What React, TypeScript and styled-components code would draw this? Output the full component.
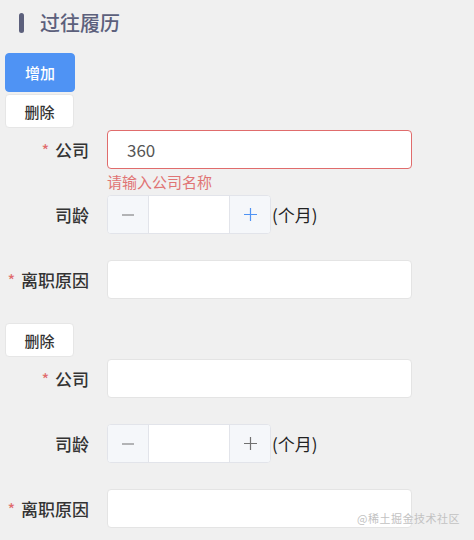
import React from 'react';
import styled, {createGlobalStyle} from 'styled-components';

const FONT = `"Noto Sans CJK SC", "Noto Sans", sans-serif`;

const GlobalStyle = createGlobalStyle`
	html, body {
		margin: 0;
		padding: 0;
		background: #f0f0f0;
	}
	body {
		font-family: ${FONT};
		width: 474px;
		height: 540px;
		overflow: hidden;
	}
`;

type TExperience = {
	company: string;
	error?: string;
	months: string;
	reason: string;
	activePlus?: boolean;
};

const data: TExperience[] = [
	{company: '360', error: '请输入公司名称', months: '', reason: '', activePlus: true},
	{company: '', months: '', reason: ''},
];

function MinusIcon() {
	return (
		<svg width="14" height="14" viewBox="0 0 14 14">
			<path d="M1 7h12" stroke="currentColor" strokeWidth="1.2" />
		</svg>
	);
}

function PlusIcon() {
	return (
		<svg width="15" height="15" viewBox="0 0 15 15">
			<path d="M1 7.5h13M7.5 1v13" stroke="currentColor" strokeWidth="1.2" />
		</svg>
	);
}

function Experience({item}: {item: TExperience}) {
	return (
		<Block>
			<FormItem>
				<Label required>公司</Label>
				<Content>
					<TextInput error={!!item.error} defaultValue={item.company} />
					{item.error && <ErrorText>{item.error}</ErrorText>}
				</Content>
			</FormItem>
			<FormItem>
				<Label>司龄</Label>
				<Content>
					<Stepper>
						<StepButton>
							<MinusIcon />
						</StepButton>
						<StepInput defaultValue={item.months} />
						<StepButton active={item.activePlus} right>
							<PlusIcon />
						</StepButton>
					</Stepper>
					<Unit>(个月)</Unit>
				</Content>
			</FormItem>
			<FormItem>
				<Label required>离职原因</Label>
				<Content>
					<TextInput defaultValue={item.reason} />
				</Content>
			</FormItem>
		</Block>
	);
}

export default function App() {
	return (
		<>
			<GlobalStyle />
			<Page>
				<Header>
					<Marker />
					<Title>过往履历</Title>
				</Header>
				<AddButton>增加</AddButton>
				{data.map((item, i) => (
					<Group key={i}>
						<DeleteButton>删除</DeleteButton>
						<Experience item={item} />
					</Group>
				))}
				<Watermark>@稀土掘金技术社区</Watermark>
			</Page>
		</>
	);
}

const Page = styled.div`
	position: relative;
	width: 474px;
	height: 540px;
	padding: 0 5px;
	box-sizing: border-box;
	background: #f0f0f0;
`;

const Header = styled.div`
	display: flex;
	align-items: center;
	height: 45px;
	padding-left: 14px;
	margin-bottom: 8px;
`;

const Marker = styled.span`
	width: 5px;
	height: 20px;
	border-radius: 3px;
	background: #5c607c;
	margin-right: 16px;
`;

const Title = styled.h2`
	margin: 0;
	font-size: 20px;
	font-weight: 500;
	color: #5c607c;
	letter-spacing: 0;
`;

const BaseButton = styled.button`
	display: block;
	font-family: ${FONT};
	font-size: 15px;
	font-weight: 500;
	border-radius: 4px;
	cursor: pointer;
	padding: 0;
	margin-bottom: 2px;
`;

const AddButton = styled(BaseButton)`
	width: 70px;
	height: 39px;
	background: #4f93f4;
	border: 1px solid #4f93f4;
	color: #fff;
`;

const DeleteButton = styled(BaseButton)`
	width: 69px;
	height: 34px;
	background: #fff;
	border: 1px solid #e6e6e6;
	color: #333;
`;

const Group = styled.div`
	& + & {
		margin-top: 24px;
	}
`;

const Block = styled.div`
	display: flex;
	flex-direction: column;
	gap: 26px;
`;

const FormItem = styled.div`
	display: flex;
	align-items: center;
	height: 39px;
`;

const Label = styled.label<{required?: boolean}>`
	width: 102px;
	flex-shrink: 0;
	box-sizing: border-box;
	padding-right: 18px;
	text-align: right;
	font-size: 17px;
	font-weight: 500;
	color: #333;
	&::before {
		content: ${(p) => (p.required ? "'*'" : "''")};
		color: #e06c6c;
		font-size: 15px;
		margin-right: 6px;
		position: relative;
		top: -1px;
	}
`;

const Content = styled.div`
	position: relative;
	display: flex;
	align-items: center;
	height: 100%;
`;

const TextInput = styled.input<{error?: boolean}>`
	width: 305px;
	height: 39px;
	box-sizing: border-box;
	border: 1px solid ${(p) => (p.error ? '#e06c6c' : '#e4e4e4')};
	border-radius: 4px;
	background: #fff;
	padding: 0 19px;
	font-family: ${FONT};
	font-size: 17px;
	color: #555;
	outline: none;
`;

const ErrorText = styled.div`
	position: absolute;
	left: 0;
	top: 42px;
	font-size: 15px;
	line-height: 20px;
	color: #e07474;
	white-space: nowrap;
`;

const Stepper = styled.div`
	display: flex;
	width: 164px;
	height: 39px;
	box-sizing: border-box;
	border: 1px solid #e2e4ea;
	border-radius: 4px;
	overflow: hidden;
	background: #fff;
`;

const StepButton = styled.span<{active?: boolean; right?: boolean}>`
	display: flex;
	align-items: center;
	justify-content: center;
	width: 40px;
	flex-shrink: 0;
	background: #f5f7fa;
	color: ${(p) => (p.active ? '#4f93f4' : '#707070')};
	border-left: ${(p) => (p.right ? '1px solid #e2e4ea' : 'none')};
	border-right: ${(p) => (p.right ? 'none' : '1px solid #e2e4ea')};
`;

const StepInput = styled.input`
	flex: 1;
	min-width: 0;
	border: none;
	outline: none;
	text-align: center;
	font-family: ${FONT};
	font-size: 17px;
	background: #fff;
`;

const Unit = styled.span`
	margin-left: 1px;
	font-size: 17px;
	color: #222;
`;

const Watermark = styled.div`
	position: absolute;
	right: 14px;
	bottom: 14px;
	font-size: 11px;
	color: #c2c2c2;
	letter-spacing: 0.5px;
`;
